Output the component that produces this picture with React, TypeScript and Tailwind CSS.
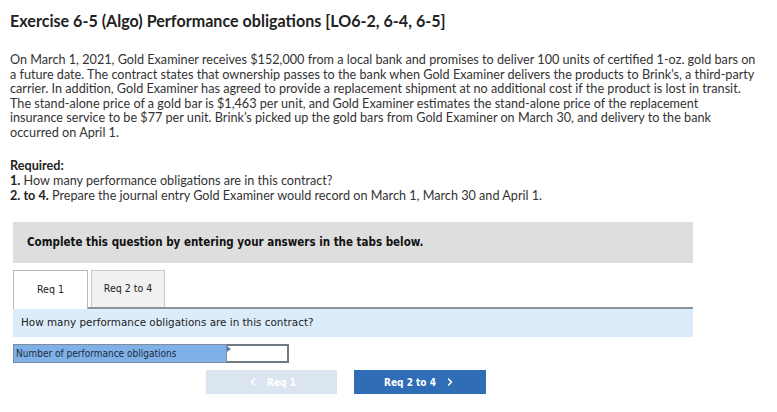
import { ChevronLeft, ChevronRight } from 'lucide-react';

const body = { fontFamily: 'Lato, "Liberation Sans", sans-serif' };
const cond = { fontFamily: '"DejaVu Sans Condensed", "DejaVu Sans", sans-serif' };
const plain = { fontFamily: '"DejaVu Sans", Verdana, sans-serif' };
const narrow = { fontFamily: '"Liberation Sans Narrow", "DejaVu Sans Condensed", sans-serif' };

const lines = [
  'On March 1, 2021, Gold Examiner receives $152,000 from a local bank and promises to deliver 100 units of certified 1-oz. gold bars on',
  'a future date. The contract states that ownership passes to the bank when Gold Examiner delivers the products to Brink’s, a third-party',
  'carrier. In addition, Gold Examiner has agreed to provide a replacement shipment at no additional cost if the product is lost in transit.',
  'The stand-alone price of a gold bar is $1,463 per unit, and Gold Examiner estimates the stand-alone price of the replacement',
  'insurance service to be $77 per unit. Brink’s picked up the gold bars from Gold Examiner on March 30, and delivery to the bank',
  'occurred on April 1.',
];

export default function App() {
  return (
    <div className="h-[412px] w-[777px] overflow-hidden bg-white text-[#333]" style={body}>
      <h1 className="pl-[10px] pt-[11px] text-[16.1px] font-bold leading-[20px] text-[#222]">
        Exercise 6-5 (Algo) Performance obligations [LO6-2, 6-4, 6-5]
      </h1>

      <p className="mt-[22px] pl-[10px] text-[12.65px] leading-[14.5px] text-[#333]">
        {lines.map((l) => (
          <span key={l} className="block whitespace-nowrap">
            {l}
          </span>
        ))}
      </p>

      <div className="mt-[18px] pl-[10px] text-[12.65px] leading-[15px]">
        <p className="font-bold text-[#222]">Required:</p>
        <p>
          <span className="font-bold text-[#222]">1.</span> How many performance obligations are in this contract?
        </p>
        <p>
          <span className="font-bold text-[#222]">2. to 4.</span> Prepare the journal entry Gold Examiner would record on March 1, March 30 and April 1.
        </p>
      </div>

      <div className="ml-[13px] mt-[19px] w-[680px]">
        <div className="flex h-[41px] items-center bg-[#dedede] pl-[14px]">
          <span className="text-[11.5px] font-bold text-[#111]" style={cond}>
            Complete this question by entering your answers in the tabs below.
          </span>
        </div>

        <div className="mt-[7px] flex items-end gap-[3px] border-b-2 border-[#8c9599]">
          <div
            className="-mb-[2px] flex h-[39px] w-[75px] items-center justify-center border border-b-0 border-[#b9b9b9] bg-white text-[10.5px] text-[#222]"
            style={cond}
          >
            Req 1
          </div>
          <div
            className="flex h-[37px] w-[74px] items-center justify-center border border-b-0 border-[#c9c9c9] bg-[#f1f1f1] text-[10.5px] text-[#222]"
            style={cond}
          >
            Req 2 to 4
          </div>
        </div>

        <div className="flex h-[28px] items-center bg-[#dcecfa] pl-[8px]">
          <span className="text-[10.4px] text-[#222]" style={plain}>
            How many performance obligations are in this contract?
          </span>
        </div>

        <div className="mt-[7px] flex h-[19px]">
          <div
            className="flex w-[214px] items-center border border-[#7f8c99] bg-[#7fb1e8] pl-[2px] text-[10px] text-[#1d2a3a]"
            style={narrow}
          >
            Number of performance obligations
          </div>
          <div className="relative w-[62px] border-2 border-l-0 border-[#6f7a80] bg-white">
            <span className="absolute left-0 top-0 h-0 w-0 border-y-[3px] border-l-[4px] border-y-transparent border-l-[#5b7fae]" />
          </div>
        </div>

        <div className="mt-[7px] flex gap-[17px] pl-[193px]">
          <button
            className="flex h-[24px] w-[131px] items-center justify-center gap-[8px] bg-[#dbe5f0] text-[10px] font-bold text-white"
            style={narrow}
          >
            <ChevronLeft className="h-[12px] w-[12px]" strokeWidth={3} />
            Req 1
          </button>
          <button
            className="flex h-[24px] w-[132px] items-center justify-center gap-[8px] bg-[#2f6eb6] text-[10px] font-bold text-white"
            style={narrow}
          >
            Req 2 to 4
            <ChevronRight className="h-[12px] w-[12px]" strokeWidth={3} />
          </button>
        </div>
      </div>
    </div>
  );
}
